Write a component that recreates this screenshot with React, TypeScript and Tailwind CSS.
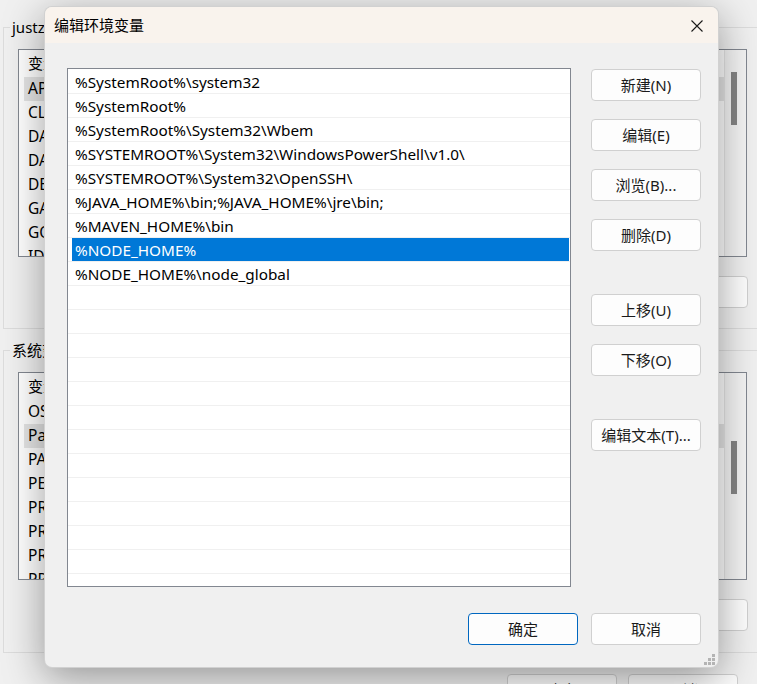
import clsx from 'clsx'

const FONT = { fontFamily: '"Noto Sans", "Noto Sans CJK SC", sans-serif' }

const paths = [
  '%SystemRoot%\\system32',
  '%SystemRoot%',
  '%SystemRoot%\\System32\\Wbem',
  '%SYSTEMROOT%\\System32\\WindowsPowerShell\\v1.0\\',
  '%SYSTEMROOT%\\System32\\OpenSSH\\',
  '%JAVA_HOME%\\bin;%JAVA_HOME%\\jre\\bin;',
  '%MAVEN_HOME%\\bin',
  '%NODE_HOME%',
  '%NODE_HOME%\\node_global',
]

const userVars = [
  ['APPDATA_HOME', 'C:\\Users\\justzhang\\AppData'],
  ['CLASSPATH', '.;%JAVA_HOME%\\lib'],
  ['DATAGRIP', 'C:\\Program Files\\DataGrip\\bin'],
  ['DATASPELL', 'C:\\Program Files\\DataSpell\\bin'],
  ['DEVECOSTUDIO', 'C:\\Program Files\\DevEco\\bin'],
  ['GATEWAY', 'C:\\Program Files\\Gateway\\bin'],
  ['GOLAND', 'C:\\Program Files\\GoLand\\bin'],
  ['IDEA', 'C:\\Program Files\\IntelliJ IDEA\\bin'],
]

const sysVars = [
  ['OS', 'Windows_NT'],
  ['Path', '%SystemRoot%\\system32;%SystemRoot%;...'],
  ['PATHEXT', '.COM;.EXE;.BAT;.CMD;.VBS;.JS'],
  ['PERL5LIB', ''],
  ['PROCESSOR_ARCHITECTURE', 'AMD64'],
  ['PROCESSOR_IDENTIFIER', 'Intel64 Family 6 Model 154'],
  ['PROCESSOR_LEVEL', '6'],
  ['PROCESSOR_REVISION', '9a03'],
]

function Btn({ label, primary, className }: { label: string; primary?: boolean; className?: string }) {
  return (
    <button
      className={clsx(
        'h-8 w-[110px] rounded-[4px] border bg-[#fdfdfd] text-[15px] leading-none text-[#1a1a1a]',
        primary ? 'border-[#0067c0]' : 'border-[#d0d0d0]',
        className
      )}
    >
      {label}
    </button>
  )
}

function VarList({ rows, selected, thumbTop }: { rows: string[][]; selected: number; thumbTop: string }) {
  return (
    <div className="flex h-[208px] overflow-hidden border border-[#828790] bg-white">
      <div className="flex-1 overflow-hidden pl-[5px]">
        <div className="flex h-[27px] items-center pl-[4px] text-[15px]">
          <span className="w-[180px]">变量</span>
          <span>值</span>
        </div>
        {rows.map(([k, v], i) => (
          <div
            key={k}
            className={clsx('flex h-6 items-center pl-[4px] text-[15.5px] text-black', i === selected && 'bg-[#e5e5e5]')}
          >
            <span className="w-[180px] whitespace-nowrap">{k}</span>
            <span className="whitespace-nowrap">{v}</span>
          </div>
        ))}
      </div>
      <div className="w-[22px] border-l border-[#e6e6e6] bg-[#f4f4f4]">
        <div className={clsx('ml-[6px] h-[53px] w-[6px] bg-[#858585]', thumbTop)} />
      </div>
    </div>
  )
}

function Group({ title, children, className }: { title: string; children: React.ReactNode; className?: string }) {
  return (
    <fieldset className={clsx('border border-[#dcdcdc] px-[14px] pt-[12px]', className)}>
      <legend className="ml-[-8px] px-[2px] text-[15px] leading-[20px] text-black">{title}</legend>
      {children}
    </fieldset>
  )
}

function BackWindow() {
  return (
    <div className="ml-[3px] w-[759px] pt-[17px]">
      <Group title="justzhang 的用户变量(U)" className="pb-[20px]">
        <VarList rows={userVars} selected={0} thumbTop="mt-[22px]" />
        <div className="mt-[19px] flex justify-end gap-[11px]">
          <Btn label="新建(N)..." />
          <Btn label="编辑(E)..." />
          <Btn label="删除(D)" className="mr-[-1px]" />
        </div>
      </Group>
      <Group title="系统变量(S)" className="mt-[11px] pb-[21px]">
        <VarList rows={sysVars} selected={1} thumbTop="mt-[68px]" />
        <div className="mt-[19px] flex justify-end gap-[11px]">
          <Btn label="新建(W)..." />
          <Btn label="编辑(I)..." />
          <Btn label="删除(L)" className="mr-[-1px]" />
        </div>
      </Group>
      <div className="mt-[21px] flex justify-end gap-[11px] pr-[24px]">
        <Btn label="确定" />
        <Btn label="取消" />
      </div>
    </div>
  )
}

function Dialog() {
  const empty = Array.from({ length: 14 })
  return (
    <div className="absolute left-[44px] top-[6px] flex h-[662px] w-[675px] flex-col overflow-hidden rounded-[8px] border border-[#bdbdbd]/60 bg-[#f0f0f0] shadow-[0_10px_40px_rgba(0,0,0,0.38)]">
      <div className="flex h-[36px] shrink-0 items-center justify-between bg-[#f9f3ed] pl-[9px] pr-[15px]">
        <span className="text-[15px] text-black">编辑环境变量</span>
        <svg width="12" height="12" viewBox="0 0 12 12" className="mt-[2px]">
          <path d="M0.5 0.5 L11.5 11.5 M11.5 0.5 L0.5 11.5" stroke="#1a1a1a" strokeWidth="1.1" />
        </svg>
      </div>
      <div className="flex pl-[22px] pt-[25px]">
        <div className="h-[519px] w-[504px] overflow-hidden border border-[#828790] bg-white pt-[1px]">
          {paths.map((p, i) => (
            <div key={p} className="h-6 border-b border-[#f0f0f0]">
              <div
                className={clsx(
                  'ml-[4px] mr-[1px] flex h-[23px] items-center pl-[3px] pt-[1px] text-[15.3px] whitespace-nowrap',
                  i === 7 ? 'bg-[#0078d7] text-white' : 'text-black'
                )}
              >
                {p}
              </div>
            </div>
          ))}
          {empty.map((_, i) => (
            <div key={i} className="h-6 border-b border-[#f0f0f0]" />
          ))}
        </div>
        <div className="ml-[20px] mt-[1px] flex flex-col">
          <div className="flex flex-col gap-[18px]">
            <Btn label="新建(N)" />
            <Btn label="编辑(E)" />
            <Btn label="浏览(B)..." />
            <Btn label="删除(D)" />
          </div>
          <div className="mt-[43px] flex flex-col gap-[18px]">
            <Btn label="上移(U)" />
            <Btn label="下移(O)" />
          </div>
          <Btn label="编辑文本(T)..." className="mt-[43px]" />
        </div>
      </div>
      <div className="mt-[26px] flex justify-end gap-[13px] pr-[17px]">
        <Btn label="确定" primary />
        <Btn label="取消" />
      </div>
      <svg width="12" height="12" viewBox="0 0 12 12" className="absolute bottom-[1px] right-[2px]">
        <g fill="#b4b4b4">
          <rect x="8" y="0" width="3" height="3" />
          <rect x="4" y="4" width="3" height="3" />
          <rect x="8" y="4" width="3" height="3" />
          <rect x="0" y="8" width="3" height="3" />
          <rect x="4" y="8" width="3" height="3" />
          <rect x="8" y="8" width="3" height="3" />
        </g>
      </svg>
    </div>
  )
}

export default function App() {
  return (
    <div className="relative h-[684px] w-[757px] overflow-hidden bg-[#f0f0f0]" style={FONT}>
      <BackWindow />
      <Dialog />
    </div>
  )
}
